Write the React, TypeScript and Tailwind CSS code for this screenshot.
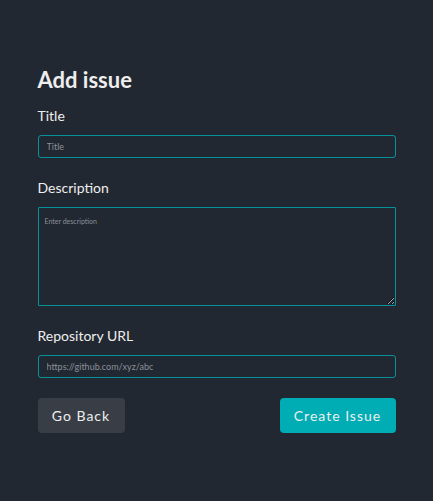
import React, { useState } from "react";

export default function App() {
    const [title, setTitle] = useState("");
    const [description, setDescription] = useState("");
    const [repoUrl, setRepoUrl] = useState("");

    return (
        <div
            className="min-h-screen w-full bg-[#222831] text-[#eeeeee]"
            style={{ fontFamily: 'Lato, "Noto Sans", sans-serif' }}
        >
            <div className="mx-auto w-[358px] pt-[66px]">
                <h1 className="text-[22px] font-bold leading-[28px]">Add issue</h1>

                <label className="mt-3 block text-[14px] leading-[20px]">Title</label>
                <input
                    value={title}
                    onChange={(e) => setTitle(e.target.value)}
                    placeholder="Title"
                    className="mt-[9px] block h-[23px] w-full rounded-[3px] border border-[#00adb5]/80 bg-transparent px-2 text-[9px] text-[#eeeeee] outline-none placeholder:text-[#8b9099]"
                />

                <label className="mt-5 block text-[14px] leading-[20px]">Description</label>
                <textarea
                    value={description}
                    onChange={(e) => setDescription(e.target.value)}
                    placeholder="Enter description"
                    className="mt-[9px] block h-[99px] w-full rounded-[1px] border border-[#00adb5]/80 bg-transparent px-[6px] py-[8px] text-[7px] text-[#eeeeee] outline-none placeholder:text-[#8b9099]"
                />

                <label className="mt-5 block text-[14px] leading-[20px]">Repository URL</label>
                <input
                    value={repoUrl}
                    onChange={(e) => setRepoUrl(e.target.value)}
                    placeholder="https://github.com/xyz/abc"
                    className="mt-[9px] block h-[23px] w-full rounded-[3px] border border-[#00adb5]/80 bg-transparent px-2 text-[9px] text-[#eeeeee] outline-none placeholder:text-[#8b9099]"
                />

                <div className="mt-5 flex items-center justify-between">
                    <button className="h-[35px] w-[87px] rounded-[4px] bg-[#393e46] text-[14px] tracking-[1px] text-[#eeeeee]">
                        Go Back
                    </button>
                    <button className="h-[35px] w-[116px] rounded-[4px] bg-[#00adb5] text-[14px] tracking-[1px] text-[#eeeeee]">
                        Create Issue
                    </button>
                </div>
            </div>
        </div>
    );
}
